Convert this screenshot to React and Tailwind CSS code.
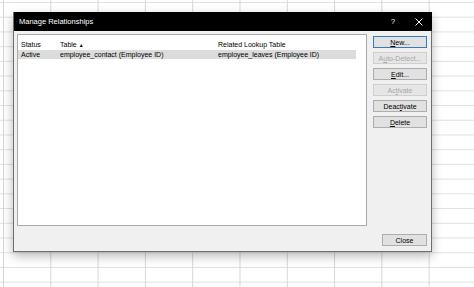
import React from 'react';

const buttons = [
  { pre: '', key: 'N', post: 'ew...', disabled: false, focus: true },
  { pre: 'A', key: 'u', post: 'to-Detect...', disabled: true },
  { pre: '', key: 'E', post: 'dit...', disabled: false },
  { pre: 'Ac', key: 't', post: 'ivate', disabled: true },
  { pre: 'Deac', key: 't', post: 'ivate', disabled: false },
  { pre: '', key: 'D', post: 'elete', disabled: false },
];

const DialogButton = ({ pre, k, post, disabled, focus }) => (
  <div
    className={`h-[12px] flex items-center justify-center border ${
      focus ? 'border-[#3a79b4] bg-[#e1e1e1]' : disabled ? 'border-[#cfcfcf] bg-[#e6e6e6]' : 'border-[#adadad] bg-[#e1e1e1]'
    } ${disabled ? 'text-[#a6a6a6]' : 'text-black'}`}
  >
    <span>
      {pre}
      <span className="underline underline-offset-1 decoration-current">{k}</span>
      {post}
    </span>
  </div>
);

const App = () => {
  return (
    <div
      className="w-[474px] h-[287px] overflow-hidden bg-white bg-[linear-gradient(to_right,#d6d6d6_1px,transparent_1px),linear-gradient(to_bottom,#e0e0e0_1px,transparent_1px)] bg-[size:47.3px_14.72px] bg-[position:3px_2px] pt-[12px] pl-[13px] text-[7px] leading-none"
      style={{ fontFamily: '"Liberation Sans", Arial, sans-serif' }}
    >
      {/* Dialog */}
      <div className="w-[419px] h-[240px] flex flex-col border-l border-[#6e6e6e] shadow-[0_4px_10px_rgba(0,0,0,0.28)]">
        {/* Title bar */}
        <div className="h-[19px] bg-black text-white flex items-center pl-[5px] text-[7.5px]">
          <span className="flex-1">Manage Relationships</span>
          <span className="w-[12px] text-center mr-[16px] text-[8px]">?</span>
          <svg width="8" height="8" viewBox="0 0 8 8" className="mr-[9px]">
            <path d="M0.5 0.5L7.5 7.5M7.5 0.5L0.5 7.5" stroke="#fff" strokeWidth="1" />
          </svg>
        </div>

        {/* Body */}
        <div className="flex-1 bg-[#f0f0f0] border-r border-b border-[#6e6e6e] flex flex-col pl-[3px] pr-[4px] pt-[3px]">
          <div className="flex">
            {/* List */}
            <div className="w-[350px] h-[192px] bg-white border border-[#a9a9a9] pt-[4px]">
              <div className="flex items-center h-[10px] text-black">
                <span className="w-[42px] pl-[3px]">Status</span>
                <span className="w-[158px]">
                  Table <span className="text-[5px] align-middle">▲</span>
                </span>
                <span>Related Lookup Table</span>
              </div>
              <div className="flex items-center h-[9px] mt-[1px] mr-[10px] bg-[#dcdcdc] text-black">
                <span className="w-[42px] pl-[3px]">Active</span>
                <span className="w-[158px]">employee_contact (Employee ID)</span>
                <span>employee_leaves (Employee ID)</span>
              </div>
            </div>

            {/* Buttons */}
            <div className="ml-[6px] w-[54px] pt-[2px] flex flex-col gap-[4px]">
              {buttons.map((b, i) => (
                <DialogButton key={i} pre={b.pre} k={b.key} post={b.post} disabled={b.disabled} focus={b.focus} />
              ))}
            </div>
          </div>

          {/* Footer */}
          <div className="flex justify-end mt-[8px]">
            <div className="w-[45px] h-[12px] flex items-center justify-center border border-[#adadad] bg-[#e1e1e1] text-black">
              Close
            </div>
          </div>
        </div>
      </div>
    </div>
  );
};

export default App;
